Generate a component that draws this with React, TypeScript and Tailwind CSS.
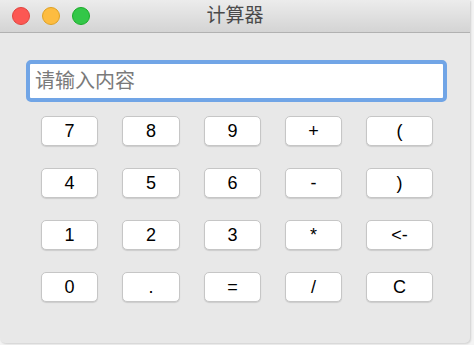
const rows = [
  ['7', '8', '9', '+', '('],
  ['4', '5', '6', '-', ')'],
  ['1', '2', '3', '*', '<-'],
  ['0', '.', '=', '/', 'C'],
]

function TrafficLights() {
  return (
    <div className="absolute left-[12px] top-[7px] flex gap-[12px]">
      <span className="size-[18px] rounded-full border border-[#e0443e] bg-[#fc5753]" />
      <span className="size-[18px] rounded-full border border-[#dea123] bg-[#fdbc40]" />
      <span className="size-[18px] rounded-full border border-[#1aab29] bg-[#33c748]" />
    </div>
  )
}

export default function App() {
  return (
    <div className="h-[345px] w-[474px] bg-[#f4f4f4] font-['Liberation_Sans','Noto_Sans_CJK_SC',sans-serif]">
      <div className="flex h-[343px] w-[470px] flex-col overflow-hidden rounded-b-[5px] bg-[#e8e8e8] shadow-[1px_1px_2px_rgba(0,0,0,0.15)]">
        <div className="relative flex h-[33px] shrink-0 items-center justify-center border-b border-[#b1b1b1] bg-gradient-to-b from-[#ececec] to-[#d4d4d4]">
          <TrafficLights />
          <span className="text-[19px] text-[#4a4a4a]">计算器</span>
        </div>
        <div className="pl-[26px] pt-[27px]">
          <div className="flex h-[42px] w-[421px] items-center rounded-[5px] border-[4px] border-[#71a5e6] bg-white pl-[5px]">
            <span className="text-[20px] text-[#7a7a7a]">请输入内容</span>
          </div>
          <div className="ml-[15px] mt-[14px] grid grid-cols-[57px_58px_57px_57px_67px] gap-x-[24px] gap-y-[22px]">
            {rows.flat().map((k) => (
              <button
                key={k}
                className="flex h-[30px] items-center justify-center rounded-[5px] border border-[#c6c6c6] bg-white text-[18px] text-black shadow-[0_1px_1px_rgba(0,0,0,0.12)]"
              >
                {k}
              </button>
            ))}
          </div>
        </div>
      </div>
    </div>
  )
}
